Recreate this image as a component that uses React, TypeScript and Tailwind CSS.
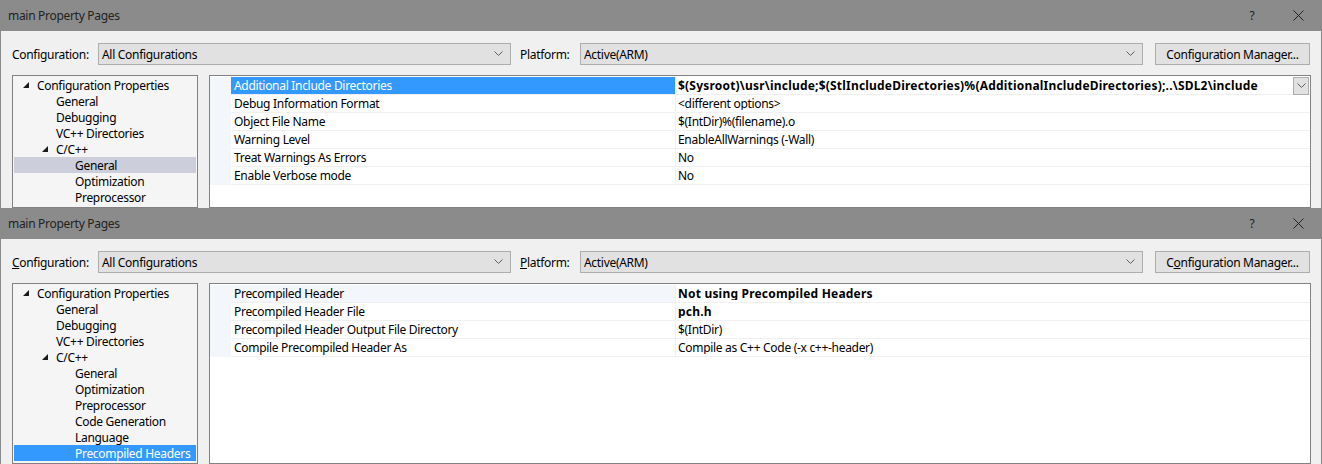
import React from "react";

type TreeItem = { label: string; level: number; expanded?: boolean };
type Prop = { name: string; value: string; bold?: boolean };

const tree: TreeItem[] = [
  { label: "Configuration Properties", level: 0, expanded: true },
  { label: "General", level: 1 },
  { label: "Debugging", level: 1 },
  { label: "VC++ Directories", level: 1 },
  { label: "C/C++", level: 1, expanded: true },
  { label: "General", level: 2 },
  { label: "Optimization", level: 2 },
  { label: "Preprocessor", level: 2 },
  { label: "Code Generation", level: 2 },
  { label: "Language", level: 2 },
  { label: "Precompiled Headers", level: 2 },
];

const generalProps: Prop[] = [
  {
    name: "Additional Include Directories",
    value:
      "$(Sysroot)\\usr\\include;$(StlIncludeDirectories)%(AdditionalIncludeDirectories);..\\SDL2\\include",
    bold: true,
  },
  { name: "Debug Information Format", value: "<different options>" },
  { name: "Object File Name", value: "$(IntDir)%(filename).o" },
  { name: "Warning Level", value: "EnableAllWarnings (-Wall)" },
  { name: "Treat Warnings As Errors", value: "No" },
  { name: "Enable Verbose mode", value: "No" },
];

const pchProps: Prop[] = [
  { name: "Precompiled Header", value: "Not using Precompiled Headers", bold: true },
  { name: "Precompiled Header File", value: "pch.h", bold: true },
  { name: "Precompiled Header Output File Directory", value: "$(IntDir)" },
  { name: "Compile Precompiled Header As", value: "Compile as C++ Code (-x c++-header)" },
];

function Chevron() {
  return (
    <svg width="9" height="6" viewBox="0 0 9 6" className="shrink-0">
      <path d="M0.5 0.5 L4.5 4.5 L8.5 0.5" fill="none" stroke="#606060" strokeWidth="1" />
    </svg>
  );
}

function Expander() {
  return (
    <svg width="6" height="6" viewBox="0 0 6 6" className="shrink-0">
      <path d="M6 0 L6 6 L0 6 Z" fill="#1a1a1a" />
    </svg>
  );
}

function Combo({ text, width }: { text: string; width: string }) {
  return (
    <div
      className={`${width} h-[22px] flex items-center justify-between bg-[#e1e1e1] border border-[#adadad] pl-[3px] pr-[7px]`}
    >
      <span className="pt-px">{text}</span>
      <Chevron />
    </div>
  );
}

function Dialog({
  height,
  selected,
  active,
  props,
  focusFirst,
  accel,
}: {
  height: string;
  selected: number;
  active: boolean;
  props: Prop[];
  focusFirst?: boolean;
  accel?: boolean;
}) {
  return (
    <div className={`${height} shrink-0 flex flex-col overflow-hidden border-x border-[#8a8a8a] bg-[#f0f0f0]`}>
      <div className="h-[31px] shrink-0 bg-[#8b8b8b] flex items-center pl-[7px] pr-[17px] text-[#222]">
        <span className="flex-1">main Property Pages</span>
        <span className="w-[14px] text-center mr-[34px]">?</span>
        <svg width="11" height="11" viewBox="0 0 11 11">
          <path d="M0.5 0.5 L10.5 10.5 M10.5 0.5 L0.5 10.5" stroke="#222" strokeWidth="1" />
        </svg>
      </div>

      <div className="flex items-center mt-[12px] pl-[11px] h-[22px] shrink-0">
        <span className="w-[86px] pt-px">
          {accel ? (
            <>
              <u>C</u>onfiguration:
            </>
          ) : (
            "Configuration:"
          )}
        </span>
        <Combo text="All Configurations" width="w-[413px]" />
        <span className="w-[60px] ml-[9px] pt-px">
          {accel ? (
            <>
              <u>P</u>latform:
            </>
          ) : (
            "Platform:"
          )}
        </span>
        <Combo text="Active(ARM)" width="w-[563px]" />
        <div className="ml-[12px] w-[155px] h-[22px] flex items-center justify-center bg-[#e1e1e1] border border-[#adadad] pt-px">
          {accel ? (
            <span>
              C<u>o</u>nfiguration Manager...
            </span>
          ) : (
            "Configuration Manager..."
          )}
        </div>
      </div>

      <div className="flex flex-1 mt-[10px] pl-[11px] pr-[10px] min-h-0">
        <div className="w-[186px] shrink-0 border border-[#828282] bg-[#f5f5f5] p-px">
          {tree.map((t, i) => (
            <div
              key={i}
              className={`h-[16px] flex items-center whitespace-nowrap ${
                i === selected
                  ? active
                    ? "bg-[#3399ff] text-white"
                    : "bg-[#cccedb]"
                  : ""
              }`}
            >
              <div
                className={`flex items-center justify-end shrink-0 pr-[8px] ${
                  t.level === 0 ? "w-[23px]" : t.level === 1 ? "w-[42px]" : "w-[61px]"
                }`}
              >
                {t.expanded && <Expander />}
              </div>
              <span className="pt-px">{t.label}</span>
            </div>
          ))}
        </div>

        <div className="flex-1 ml-[11px] border border-[#828282] bg-white pt-px">
          {props.map((p, i) => {
            const sel = !focusFirst && i === 0;
            const focus = focusFirst && i === 0;
            return (
              <div key={i} className="h-[18px] flex whitespace-nowrap">
                <div className="w-[21px] shrink-0 bg-[#f3f6fb]" />
                <div
                  className={`w-[444px] shrink-0 flex items-center pl-[3px] pt-px border-b border-[#f0f0f0] ${
                    sel ? "bg-[#3399ff] text-white" : focus ? "bg-[#f3f6fb]" : ""
                  }`}
                >
                  {p.name}
                </div>
                <div
                  className={`flex-1 flex items-center pl-[2px] border-l border-b border-[#f0f0f0] ${
                    p.bold ? "font-bold tracking-[0.2px]" : ""
                  }`}
                >
                  <span className="flex-1 overflow-hidden pt-px">{p.value}</span>
                  {sel && (
                    <div className="w-[16px] h-[18px] flex items-center justify-center bg-[#e1e1e1] border border-[#adadad] mr-px">
                      <Chevron />
                    </div>
                  )}
                </div>
              </div>
            );
          })}
        </div>
      </div>
    </div>
  );
}

export default function App() {
  return (
    <div
      className="w-[1322px] h-[464px] overflow-hidden flex flex-col text-[12px] leading-none tracking-[-0.3px] text-black"
      style={{ fontFamily: '"Noto Sans", "Open Sans", sans-serif' }}
    >
      <Dialog height="h-[208px]" selected={5} active={false} props={generalProps} />
      <Dialog height="h-[256px]" selected={10} active={true} props={pchProps} focusFirst accel />
    </div>
  );
}
